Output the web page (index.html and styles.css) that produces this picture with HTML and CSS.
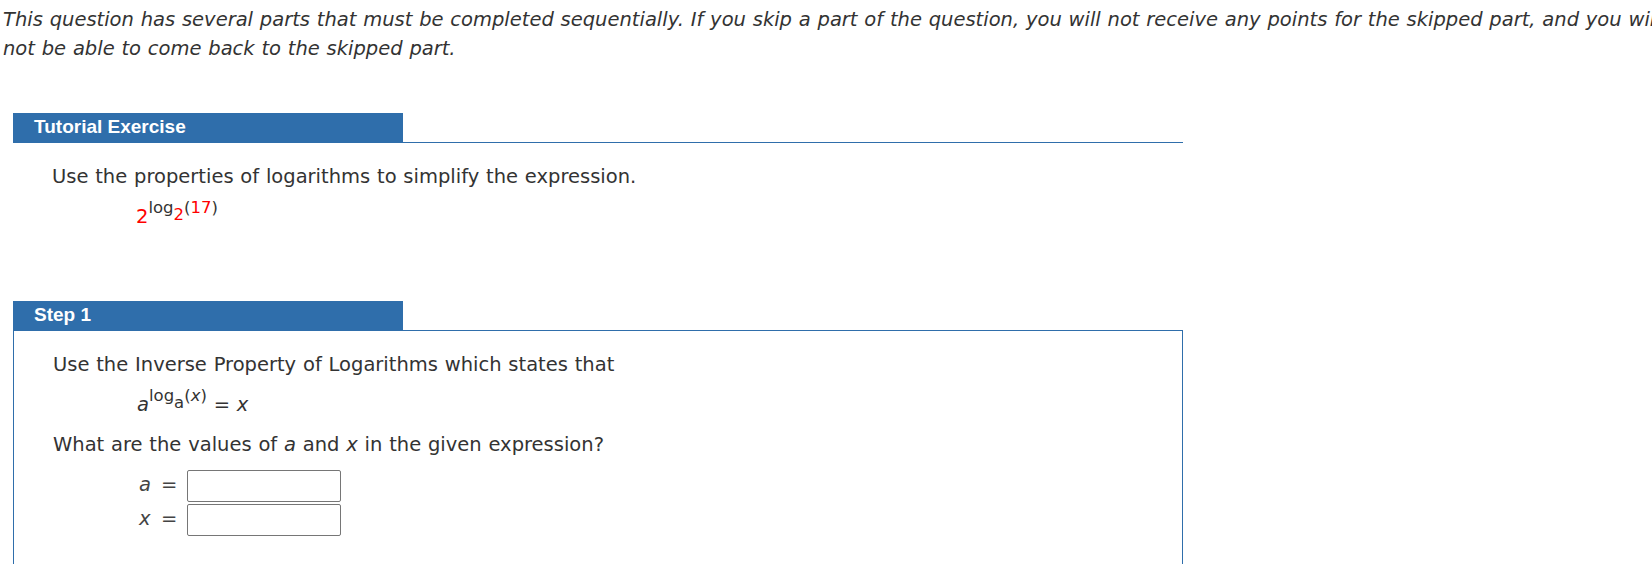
FILE: index.html
```html
<!DOCTYPE html>
<html lang="en">
<head>
<meta charset="utf-8">
<title>Tutorial Exercise</title>
<link rel="stylesheet" href="styles.css">
</head>
<body>
<p class="notice">This question has several parts that must be completed sequentially. If you skip a part of the question, you will not receive any points for the skipped part, and you will not be able to come back to the skipped part.</p>

<section class="panel">
  <div class="panel-head"><h2 class="panel-title">Tutorial Exercise</h2></div>
  <div class="panel-body">
    <p class="line">Use the properties of logarithms to simplify the expression.</p>
    <p class="line math"><span class="red">2</span><span class="sup">log<span class="sub red">2</span>(<span class="red">17</span>)</span></p>
  </div>
</section>

<section class="panel step">
  <div class="panel-head"><h2 class="panel-title">Step 1</h2></div>
  <div class="panel-body boxed">
    <p class="line">Use the Inverse Property of Logarithms which states that</p>
    <p class="line math"><i>a</i><span class="sup">log<span class="sub">a</span>(<i>x</i>)</span> = <i>x</i></p>
    <p class="line">What are the values of <i>a</i> and <i>x</i> in the given expression?</p>
    <div class="answers">
      <i class="var">a</i><span class="eq">=</span><input class="answer" type="text" aria-label="a">
      <i class="var">x</i><span class="eq">=</span><input class="answer" type="text" aria-label="x">
    </div>
  </div>
</section>
</body>
</html>
```

FILE: styles.css
```css
html, body {
  margin: 0;
  padding: 0;
  overflow: hidden;
  background: #ffffff;
}

body {
  font-family: "DejaVu Sans", Verdana, sans-serif;
  font-size: 19.5px;
  line-height: 28.5px;
  color: #333333;
  word-spacing: 0.6px;
}

.notice {
  margin: 0;
  padding: 6px 0 0 3px;
  width: 1668px;
  font-size: 19.5px;
  font-style: italic;
}

.panel {
  width: 1170px;
  margin: 50px 0 0 13px;
}

.panel.step {
  margin-top: 69.5px;
}

.panel-head {
  display: flex;
  border-bottom: 1px solid #2f6eab;
}

.panel-title {
  box-sizing: border-box;
  width: 390px;
  height: 29px;
  margin: 0;
  padding: 0 0 0 21px;
  background: #2f6eab;
  color: #ffffff;
  font-family: "Liberation Sans", Arial, sans-serif;
  font-size: 19px;
  font-weight: bold;
  line-height: 27px;
  word-spacing: 0;
}

.panel-body {
  padding: 20px 0 0 39px;
}

.panel-body.boxed {
  border: 1px solid #2f6eab;
  border-top: none;
  padding: 20px 0 40px 39px;
}

.line {
  margin: 11.5px 0 0 0;
}

.line:first-child {
  margin-top: 0;
}

.math {
  padding-left: 84px;
}

.red {
  color: #ff0000;
}

.sup {
  font-size: 16.5px;
  line-height: 0;
  vertical-align: 10px;
  word-spacing: 0;
}

.sub {
  vertical-align: -7px;
}

.answers {
  display: grid;
  grid-template-columns: auto auto auto;
  justify-content: start;
  align-items: center;
  column-gap: 10px;
  row-gap: 2px;
  margin: 10px 0 0 86px;
}

.var {
  color: #444444;
}

.eq {
  color: #444444;
}

.answer {
  box-sizing: border-box;
  width: 154px;
  height: 32px;
  margin: 0;
  padding: 0 6px;
  border: 1px solid #767676;
  border-radius: 2px;
  background: #ffffff;
  font: inherit;
}
```
